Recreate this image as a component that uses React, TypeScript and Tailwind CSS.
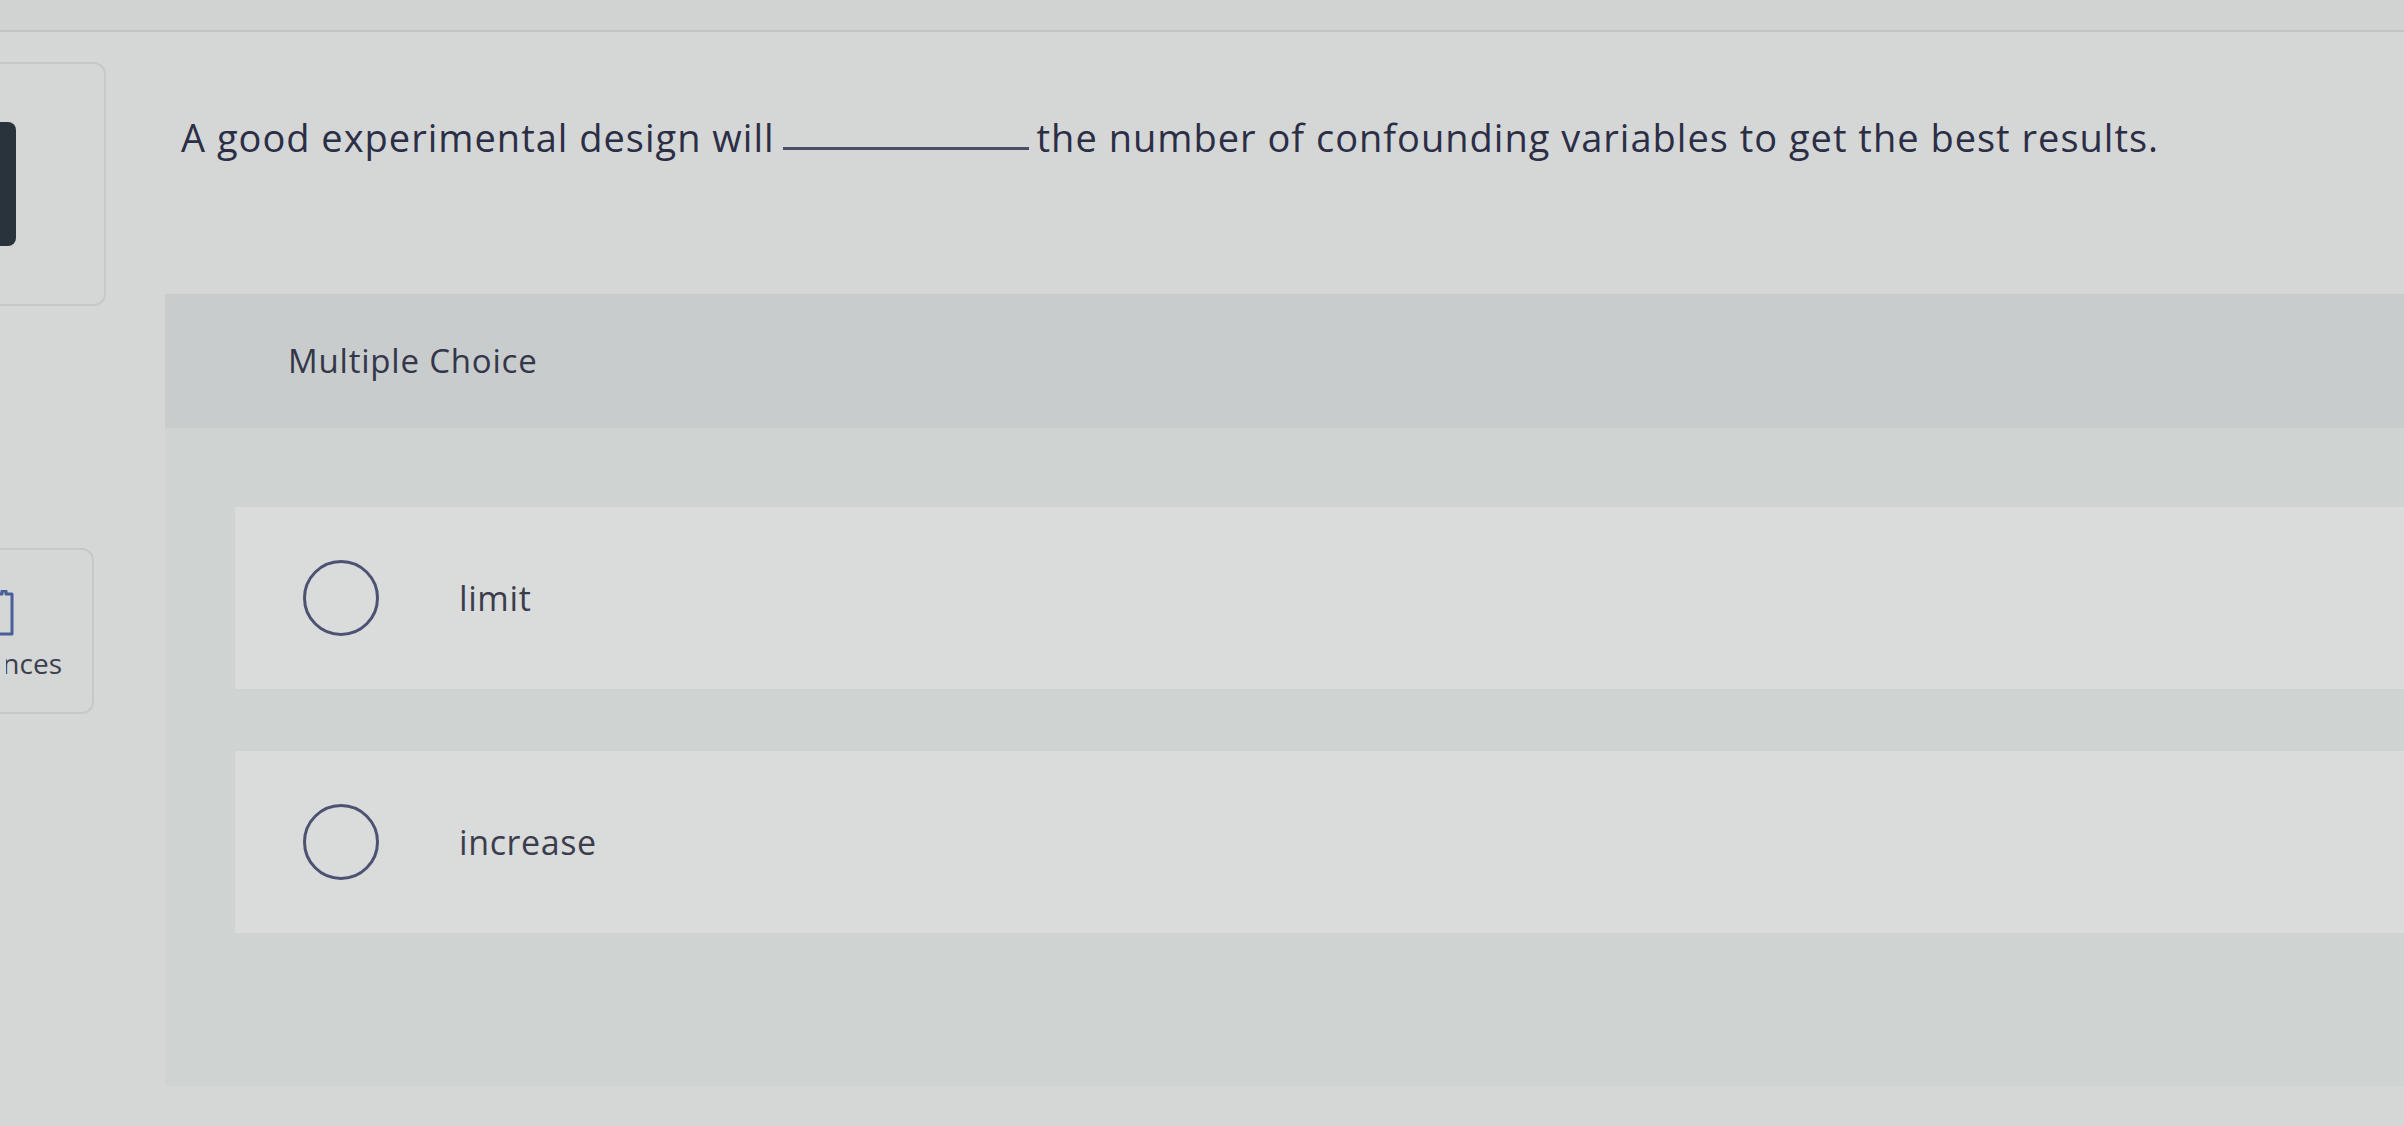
import React from "react"

const choices = ["limit", "increase"]

const Choice = ({ label }: { label: string }) => (
  <label className="flex items-center h-[182px] pl-[68px] bg-[#d9dcdb] cursor-pointer">
    <span className="w-[76px] h-[76px] rounded-full border-[3px] border-[#4e5272] shrink-0" />
    <span className="ml-[80px] text-[34px] tracking-[0.6px] text-[#3b3d4c]">{label}</span>
  </label>
)

export default function App() {
  return (
    <div
      className="w-[2404px] h-[1126px] overflow-hidden bg-[#d4d7d6] flex flex-col"
      style={{ fontFamily: "'Open Sans', Lato, sans-serif" }}
    >
      {/* top bar edge */}
      <div className="h-[32px] shrink-0 bg-[#d0d3d2] border-b-2 border-[#c2c5c4]" />

      <div className="flex flex-1">
        {/* side tools, mostly scrolled off the left edge */}
        <aside className="w-[165px] shrink-0 flex flex-col">
          <div className="mt-[30px] -ml-[60px] w-[166px] h-[244px] rounded-xl border-2 border-[#c6c9c8] flex items-center">
            <div className="ml-[44px] w-[30px] h-[124px] rounded-lg bg-[#29333b]" />
          </div>
          <div className="mt-[242px] -ml-[80px] w-[174px] h-[166px] rounded-xl border-2 border-[#c6c9c8] flex flex-col items-end pr-[30px] pt-[40px]">
            <svg width="24" height="46" viewBox="0 0 24 46" className="self-start ml-[72px]">
              <path d="M2 4h6v-3h4v3h6v40H2z" fill="none" stroke="#47609a" strokeWidth="3" strokeLinejoin="round" />
            </svg>
            <span className="mt-[6px] text-[28px] text-[#3d404e] w-[56px] overflow-hidden flex justify-end">
              <span className="shrink-0">References</span>
            </span>
          </div>
        </aside>

        <main className="flex-1 flex flex-col">
          <p className="mt-[86px] pl-[16px] text-[38px] tracking-[1px] text-[#2c2e46] leading-none flex items-end">
            <span>A good experimental design will</span>
            <span className="mx-[8px] mb-[6px] w-[246px] border-b-[3px] border-[#4c4e66]" />
            <span>the number of confounding variables to get the best results.</span>
          </p>

          <section className="mt-[138px] h-[792px] bg-[#cfd3d2] flex flex-col">
            <div className="h-[134px] bg-[#c8cccc] flex items-center pl-[123px]">
              <h2 className="text-[33px] tracking-[0.8px] text-[#34364a]">Multiple Choice</h2>
            </div>
            <div className="pt-[79px] pl-[70px] flex flex-col gap-[62px]">
              {choices.map(c => (
                <Choice key={c} label={c} />
              ))}
            </div>
          </section>
        </main>
      </div>
    </div>
  )
}
